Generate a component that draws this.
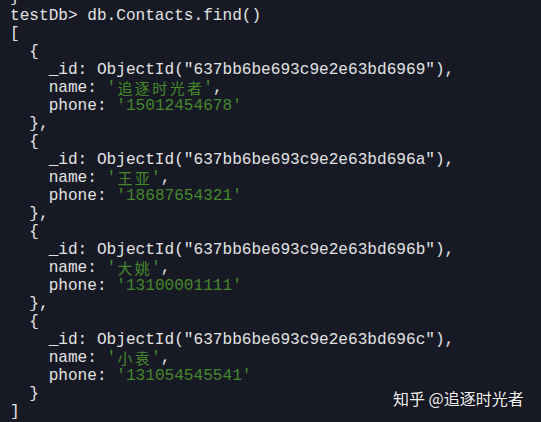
import React from "react";

const W = "text-[#e2e2e2]";
const G = "text-[#45882c]";

function Cjk({ s }: { s: string }) {
  return (
    <>
      {Array.from(s).map((c, i) => (
        <span
          key={i}
          className="inline-block w-[17.4px] text-center text-[15px] leading-[18px] align-top"
          style={{ fontFamily: '"Noto Sans CJK SC", sans-serif' }}
        >
          {c}
        </span>
      ))}
    </>
  );
}

type Rec = { id: string; name: string; phone: string };
const recs: Rec[] = [
  { id: "637bb6be693c9e2e63bd6969", name: "追逐时光者", phone: "15012454678" },
  { id: "637bb6be693c9e2e63bd696a", name: "王亚", phone: "18687654321" },
  { id: "637bb6be693c9e2e63bd696b", name: "大姚", phone: "13100001111" },
  { id: "637bb6be693c9e2e63bd696c", name: "小袁", phone: "131054545541" },
];

function Line({ children }: { children: React.ReactNode }) {
  return <div className="h-[18px] leading-[18px] whitespace-pre overflow-visible">{children}</div>;
}

export default function App() {
  return (
    <div className="relative w-[541px] h-[422px] overflow-hidden bg-[#171a24]">
      <div
        className={`-mt-[11px] pl-[10px] text-[16.1px] ${W}`}
        style={{ fontFamily: '"Liberation Mono", "Courier New", monospace' }}
      >
        <Line>{"}"}</Line>
        <Line>{"testDb> db.Contacts.find()"}</Line>
        <Line>{"["}</Line>
        {recs.map((r, i) => (
          <React.Fragment key={r.id}>
            <Line>{"  {"}</Line>
            <Line>{`    _id: ObjectId("${r.id}"),`}</Line>
            <Line>
              {"    name: "}
              <span className={G}>
                '<Cjk s={r.name} />'
              </span>
              ,
            </Line>
            <Line>
              {"    phone: "}
              <span className={G}>'{r.phone}'</span>
            </Line>
            <Line>{i < recs.length - 1 ? "  }," : "  }"}</Line>
          </React.Fragment>
        ))}
        <Line>{"]"}</Line>
      </div>
      <div
        className="absolute left-[393px] top-[386px] text-[16px] leading-[24px] text-[#f0f0f0] whitespace-pre"
        style={{ fontFamily: '"Noto Sans CJK SC", "Noto Sans", sans-serif', textShadow: "0 0 2px rgba(0,0,0,0.6)" }}
      >
        知乎 @追逐时光者
      </div>
    </div>
  );
}
